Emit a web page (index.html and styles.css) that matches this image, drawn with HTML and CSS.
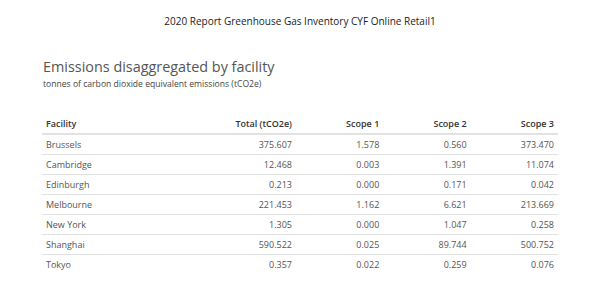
FILE: index.html
```html
<!DOCTYPE html>
<html>
<head>
<meta charset="utf-8">
<link rel="stylesheet" href="styles.css">
</head>
<body>
<div class="page">
  <h1 class="report-title">2020 Report Greenhouse Gas Inventory CYF Online Retail1</h1>
  <section class="section">
    <h2 class="section-title">Emissions disaggregated by facility</h2>
    <p class="subtitle">tonnes of carbon dioxide equivalent emissions (tCO2e)</p>
    <table class="data">
      <colgroup>
        <col class="c-fac"><col class="c-num"><col class="c-num"><col class="c-num"><col class="c-num">
      </colgroup>
      <thead>
        <tr><th class="left">Facility</th><th>Total (tCO2e)</th><th>Scope 1</th><th>Scope 2</th><th>Scope 3</th></tr>
      </thead>
      <tbody>
        <tr><td class="left">Brussels</td><td>375.607</td><td>1.578</td><td>0.560</td><td>373.470</td></tr>
        <tr><td class="left">Cambridge</td><td>12.468</td><td>0.003</td><td>1.391</td><td>11.074</td></tr>
        <tr><td class="left">Edinburgh</td><td>0.213</td><td>0.000</td><td>0.171</td><td>0.042</td></tr>
        <tr><td class="left">Melbourne</td><td>221.453</td><td>1.162</td><td>6.621</td><td>213.669</td></tr>
        <tr><td class="left">New York</td><td>1.305</td><td>0.000</td><td>1.047</td><td>0.258</td></tr>
        <tr><td class="left">Shanghai</td><td>590.522</td><td>0.025</td><td>89.744</td><td>500.752</td></tr>
        <tr><td class="left">Tokyo</td><td>0.357</td><td>0.022</td><td>0.259</td><td>0.076</td></tr>
      </tbody>
    </table>
  </section>
</div>
</body>
</html>
```

FILE: styles.css
```css
html, body {
  margin: 0;
  padding: 0;
  background: #ffffff;
}
body {
  font-family: "Open Sans", "Liberation Sans", sans-serif;
  color: #444;
}
.page {
  padding: 14px 42px 0 42px;
}
.report-title {
  margin: 0;
  text-align: center;
  font-size: 10px;
  line-height: 14px;
  font-weight: 400;
  color: #222;
}
.section-title {
  margin: 30px 0 0 1px;
  font-size: 14.4px;
  line-height: 18px;
  font-weight: 400;
  color: #555;
}
.subtitle {
  margin: 3px 0 0 1px;
  font-size: 8.6px;
  line-height: 11px;
  color: #444;
}
.data {
  margin-top: 23px;
  width: 516px;
  border-collapse: collapse;
  table-layout: fixed;
  font-size: 9px;
  color: #555;
}
.c-fac { width: 166px; }
.c-num { width: 87px; }
.data th, .data td {
  padding: 0 4px;
  height: 19px;
  text-align: right;
  border-bottom: 1px solid #e2e2e2;
  white-space: nowrap;
}
.data th {
  font-weight: 600;
  color: #333;
  height: 20px;
  border-bottom: 2px solid #e2e2e2;
}
.data .left { text-align: left; }
.data tbody tr:last-child td { border-bottom: none; }
```
